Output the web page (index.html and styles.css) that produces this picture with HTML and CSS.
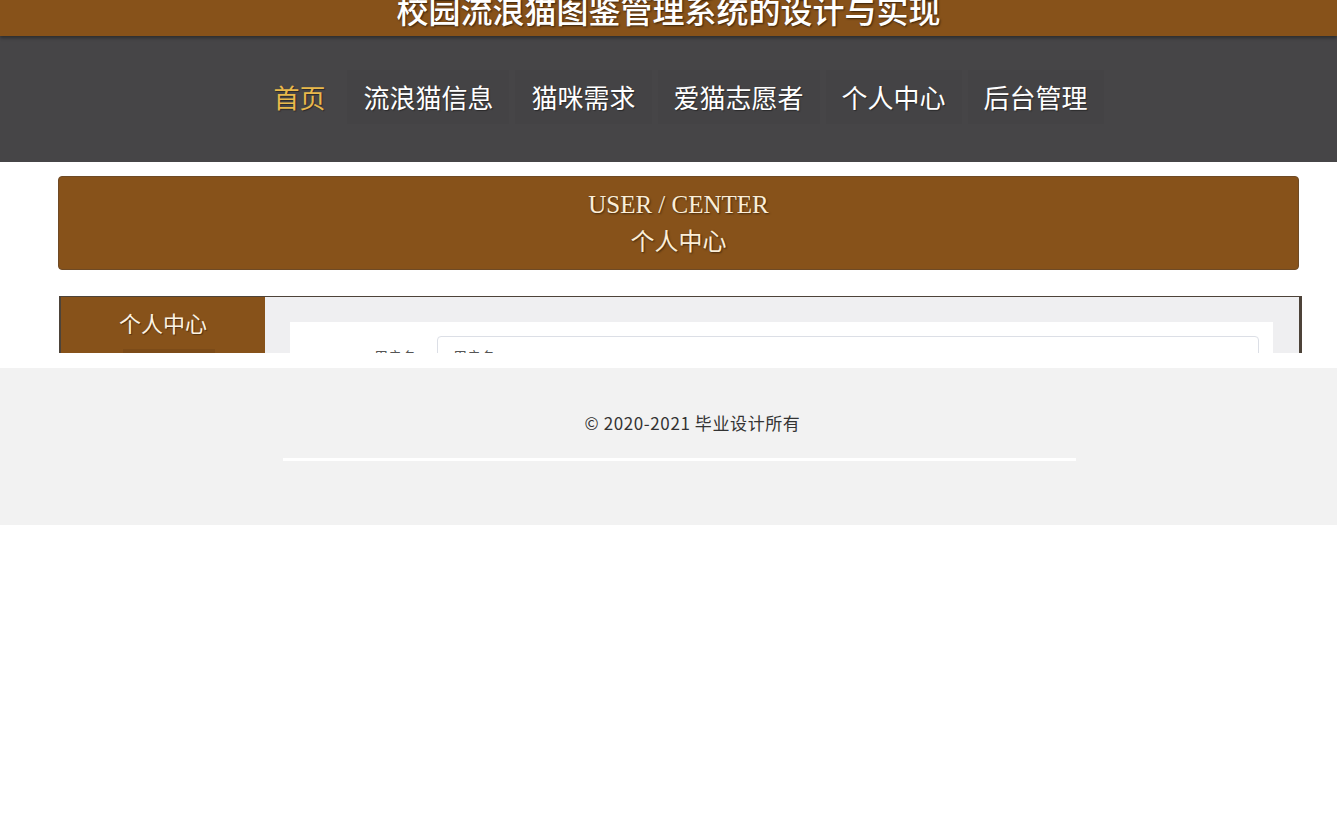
FILE: index.html
```html
<!DOCTYPE html>
<html lang="zh-CN">
  <head>
    <meta charset="UTF-8">
    <meta name="viewport" content="width=device-width, initial-scale=1.0">
    <title>校园流浪猫图鉴管理系统的设计与实现</title>
    <link rel="stylesheet" href="styles.css">
  </head>
  <body>
    <!-- Title bar -->
    <div class="top-bar">
      <h1 class="site-title">校园流浪猫图鉴管理系统的设计与实现</h1>
    </div>

    <!-- Main navigation -->
    <div class="nav-bar">
      <ul class="nav-list">
        <li class="nav-item active">首页</li>
        <li class="nav-item">流浪猫信息</li>
        <li class="nav-item">猫咪需求</li>
        <li class="nav-item">爱猫志愿者</li>
        <li class="nav-item">个人中心</li>
        <li class="nav-item">后台管理</li>
      </ul>
    </div>

    <!-- Page banner -->
    <div class="page-banner">
      <div class="banner-en">USER / CENTER</div>
      <div class="banner-cn">个人中心</div>
    </div>

    <!-- User center -->
    <div class="center-panel">
      <div class="side-menu">
        <div class="side-item">个人中心</div>
        <div class="side-item dim"></div>
      </div>
      <div class="center-body">
        <div class="form-card">
          <div class="form-row">
            <label class="form-label">用户名</label>
            <div class="form-input">用户名</div>
          </div>
        </div>
      </div>
    </div>

    <!-- Footer -->
    <div class="footer">
      <p class="copyright">© 2020-2021 毕业设计所有</p>
      <div class="footer-line"></div>
    </div>
  </body>
</html>
```

FILE: styles.css
```css
body {
  margin: 0;
  background: #fff;
  font-family: "Noto Sans CJK SC", "Liberation Sans", sans-serif;
}

.top-bar {
  height: 36px;
  overflow: hidden;
  background: #87521a;
  box-shadow: 0 2px 3px rgba(0, 0, 0, 0.35);
  position: relative;
  z-index: 2;
}

.site-title {
  margin: 0;
  font-size: 32px;
  font-weight: 500;
  line-height: 18px;
  color: #fff;
  text-align: center;
  text-shadow: 1px 1px 2px rgba(0, 0, 0, 0.6);
}

.nav-bar {
  height: 126px;
  background: #464547;
  display: flex;
  align-items: center;
  justify-content: center;
}

.nav-list {
  list-style: none;
  margin: 0;
  padding: 0 0 4px 24px;
  display: flex;
  gap: 6px;
}

.nav-item {
  padding: 10px 16px;
  font-size: 26px;
  line-height: 34px;
  color: #fff;
  background: rgba(0, 0, 0, 0.02);
  text-shadow: 1px 1px 1px rgba(0, 0, 0, 0.4);
}

.nav-item.active {
  color: #e9b94b;
  background: none;
}

.page-banner {
  margin: 14px 38px 0 58px;
  height: 94px;
  box-sizing: border-box;
  padding-top: 10px;
  background: #87521a;
  border: 1px solid #6e4a25;
  border-radius: 4px;
  text-align: center;
  color: #fbeed8;
  text-shadow: 1px 1px 2px rgba(0, 0, 0, 0.5);
}

.banner-en {
  font-family: "Liberation Serif", serif;
  font-size: 25px;
  line-height: 35px;
}

.banner-cn {
  font-size: 24px;
  line-height: 35px;
}

.center-panel {
  margin: 26px 35px 0 59px;
  height: 56px;
  overflow: hidden;
  display: flex;
  border-top: 1px solid #4d4339;
  border-left: 2px solid #4d4339;
  border-right: 3px solid #4d4339;
}

.side-menu {
  width: 204px;
  flex-shrink: 0;
  background: #87521a;
}

.side-item {
  height: 52px;
  line-height: 50px;
  text-align: center;
  font-size: 22px;
  color: #fdf3e3;
  text-shadow: 1px 1px 1px rgba(0, 0, 0, 0.4);
}

.side-item.dim {
  margin: 0 50px 0 62px;
  background: #7c4b18;
}

.center-body {
  flex: 1;
  background: #efeff1;
  padding: 25px 26px 0 25px;
}

.form-card {
  background: #fff;
  padding: 14px 14px 0 0;
  height: 60px;
}

.form-row {
  display: flex;
  align-items: flex-start;
}

.form-label {
  width: 126px;
  padding-right: 21px;
  text-align: right;
  font-size: 14px;
  line-height: 40px;
  color: #555;
}

.form-input {
  flex: 1;
  height: 40px;
  box-sizing: border-box;
  padding: 0 15px;
  border: 1px solid #dcdfe6;
  border-radius: 4px;
  font-size: 14px;
  line-height: 38px;
  color: #555;
}

.footer {
  margin-top: 15px;
  height: 157px;
  background: #f2f2f2;
  padding-top: 44px;
  box-sizing: border-box;
}

.copyright {
  margin: 0 0 0 48px;
  text-align: center;
  font-size: 17px;
  letter-spacing: 0.6px;
  line-height: 22px;
  color: #333;
}

.footer-line {
  margin: 24px 261px 0 283px;
  height: 3px;
  background: #fff;
}
```
